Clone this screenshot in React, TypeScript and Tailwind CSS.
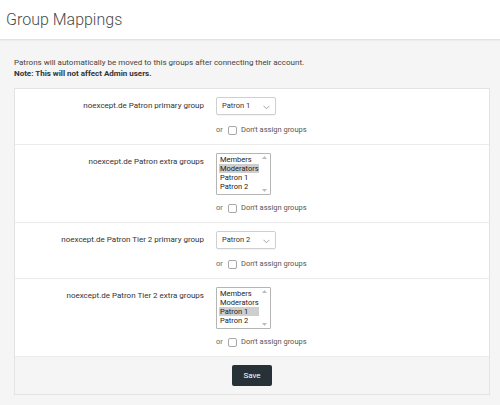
import React from "react";

const font = { fontFamily: "Roboto, 'Noto Sans', sans-serif" };

function Chevron() {
  return (
    <svg width="7" height="5" viewBox="0 0 7 5" className="absolute right-[5px] top-[7px]">
      <path d="M0.5 0.8 L3.5 3.8 L6.5 0.8" fill="none" stroke="#9a9a9a" strokeWidth="0.9" />
    </svg>
  );
}

function SelectBox({ value }: { value: string }) {
  return (
    <div className="relative w-[60px] h-[18px] border border-[#cfcfcf] rounded-[2px] bg-white shadow-[0_1px_1px_rgba(0,0,0,0.05)] text-[7.5px] leading-[16px] pl-[5px] text-[#333]">
      {value}
      <Chevron />
    </div>
  );
}

function ListBox({ items, selected }: { items: string[]; selected: string }) {
  return (
    <div className="flex w-[55px] h-[42px] border border-[#b5b5b5] rounded-[1px] bg-white">
      <div className="flex-1 pt-[1px] pl-[2px]">
        {items.map((it) => (
          <div
            key={it}
            className={
              "h-[9px] leading-[9px] text-[7.5px] pl-[1px] text-[#222] " +
              (it === selected ? "bg-[#cecece]" : "")
            }
          >
            {it}
          </div>
        ))}
      </div>
      <div className="w-[11px] flex flex-col justify-between items-center py-[2px]">
        <svg width="5" height="3" viewBox="0 0 5 3">
          <path d="M0 3 L2.5 0 L5 3 Z" fill="#bdbdbd" />
        </svg>
        <svg width="5" height="3" viewBox="0 0 5 3">
          <path d="M0 0 L2.5 3 L5 0 Z" fill="#bdbdbd" />
        </svg>
      </div>
    </div>
  );
}

function NoAssign() {
  return (
    <div className="flex items-center h-[10px] text-[7.5px] text-[#666]">
      <span className="w-[12px]">or</span>
      <span className="w-[9px] h-[9px] border border-[#a8a8a8] rounded-[2px] bg-white ml-0" />
      <span className="ml-[4px] text-[#555]">Don&apos;t assign groups</span>
    </div>
  );
}

type Row = { label: string; kind: "select" | "list"; value: string };

const rows: Row[] = [
  { label: "noexcept.de Patron primary group", kind: "select", value: "Patron 1" },
  { label: "noexcept.de Patron extra groups", kind: "list", value: "Moderators" },
  { label: "noexcept.de Patron Tier 2 primary group", kind: "select", value: "Patron 2" },
  { label: "noexcept.de Patron Tier 2 extra groups", kind: "list", value: "Patron 1" },
];

const groups = ["Members", "Moderators", "Patron 1", "Patron 2"];

export default function App() {
  return (
    <div style={font} className="w-[500px] h-[405px] bg-[#f5f5f5] overflow-hidden">
      <div className="h-[40px] bg-white border-b border-[#e2e2e2] shadow-[0_1px_1px_rgba(0,0,0,0.03)] flex items-center pl-[6px]">
        <h1 className="font-['Roboto_Light',Roboto,sans-serif] text-[16px] font-light text-[#4a4a4a] leading-none">
          Group Mappings
        </h1>
      </div>

      <div className="px-[14px] pt-[17px]">
        <p className="text-[8px] leading-[11px] text-[#444]">
          Patrons will automatically be moved to this groups after connecting their account.
        </p>
        <p className="text-[8px] leading-[11px] text-[#333] font-bold">
          Note: This will not affect Admin users.
        </p>

        <div className="mt-[9px] w-[476px] bg-white border border-[#e3e3e3]">
          {rows.map((r, i) => (
            <div
              key={r.label}
              className={
                "grid grid-cols-[189px_1fr] gap-x-[12px] pt-[8px] pb-[9px] " +
                (i > 0 ? "border-t border-[#ececec]" : "")
              }
            >
              <div className="h-[18px] leading-[18px] text-right text-[8px] text-[#333]">{r.label}</div>
              <div className="flex flex-col">
                {r.kind === "select" ? (
                  <SelectBox value={r.value} />
                ) : (
                  <ListBox items={groups} selected={r.value} />
                )}
                <div className={r.kind === "select" ? "mt-[10px]" : "mt-[8px]"}>
                  <NoAssign />
                </div>
              </div>
            </div>
          ))}
          <div className="bg-[#f5f5f5] border-t border-[#ececec] h-[38px] flex items-center justify-center">
            <button className="w-[40px] h-[21px] rounded-[2px] bg-[#263238] text-white text-[8px]">
              Save
            </button>
          </div>
        </div>
      </div>
    </div>
  );
}
